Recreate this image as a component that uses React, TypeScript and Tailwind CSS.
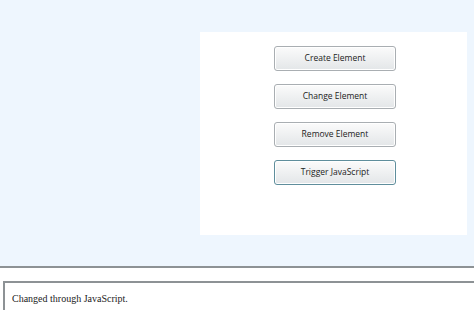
import React from 'react';

const labels = ['Create Element', 'Change Element', 'Remove Element', 'Trigger JavaScript'];

export default function App() {
  return (
    <div className="w-[474px] h-[310px] overflow-hidden bg-white">
      <div className="h-[268px] bg-[#eef6fe] border-b-2 border-[#8d9295] pt-[32px] pl-[200px]">
        <div className="w-[267px] h-[203px] bg-white pt-[14px] pl-[74px] flex flex-col gap-[13px]">
          {labels.map((label, i) => (
            <button
              key={label}
              className={
                'w-[122px] h-[25px] rounded-[3px] border text-[8.5px] text-[#222] bg-gradient-to-b from-[#fbfbfb] to-[#e3e6e8] shadow-[inset_0_0_0_1px_#fff] ' +
                (i === 3 ? 'border-[#5f8e9c]' : 'border-[#a9aeb2]')
              }
              style={{ fontFamily: '"Open Sans", "DejaVu Sans", sans-serif' }}
            >
              {label}
            </button>
          ))}
        </div>
      </div>
      <div className="pt-[13px] pl-[3px]">
        <div
          className="border-t-2 border-l-2 border-[#8d9295] h-[40px] pl-[7px] pt-[8px] text-[10px] text-[#222]"
          style={{ fontFamily: '"Liberation Serif", serif' }}
        >
          Changed through JavaScript.
        </div>
      </div>
    </div>
  );
}
